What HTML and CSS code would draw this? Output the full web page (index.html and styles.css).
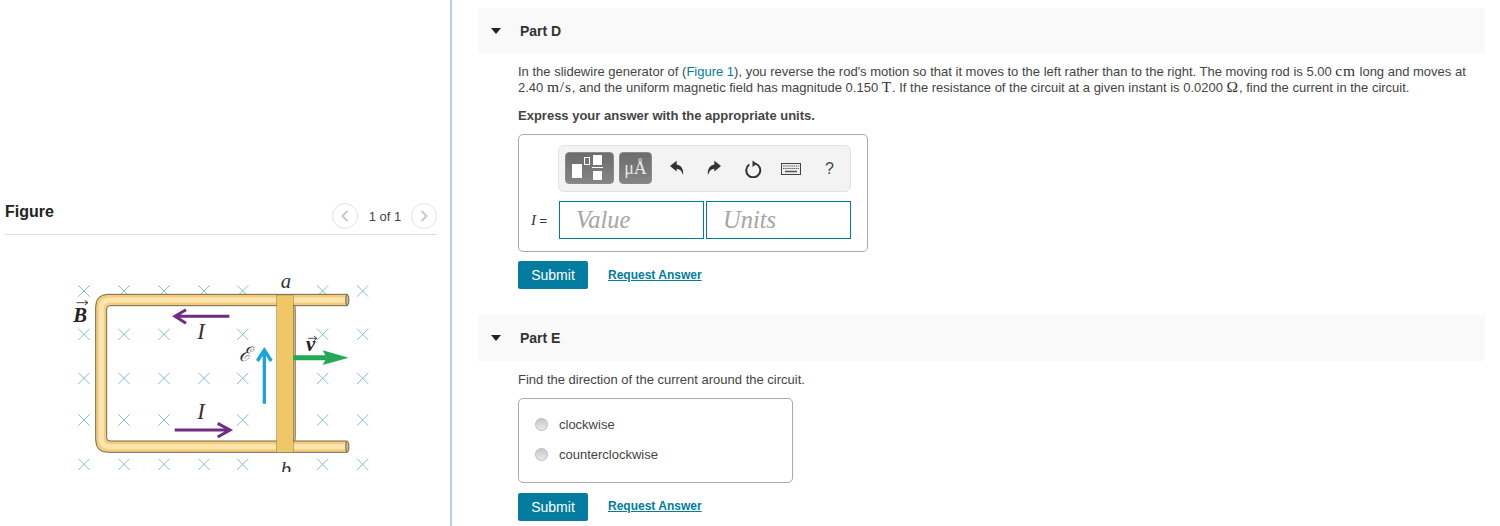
FILE: index.html
```html
<!DOCTYPE html>
<html lang="en">
<head>
<meta charset="utf-8">
<title>Part D and Part E</title>
<link rel="stylesheet" href="styles.css">
</head>
<body>
<div class="page">
  <aside class="figure-pane">
    <div class="figure-head">
      <h2 class="figure-title">Figure</h2>
      <div class="pager">
        <span class="pager-btn"><svg width="10" height="14" viewBox="0 0 10 14"><path d="M7.5 2 2.5 7l5 5" class="chev"/></svg></span>
        <span class="pager-text">1 of 1</span>
        <span class="pager-btn"><svg width="10" height="14" viewBox="0 0 10 14"><path d="M2.5 2l5 5-5 5" class="chev"/></svg></span>
      </div>
    </div>
    <svg class="diagram" width="320" height="207" viewBox="0 0 960 621">
      <defs>
        <path id="x" d="M-17-17 17 17M17-17-17 17" class="cross"/>
      </defs>
      <g id="crosses">
        <use href="#x" x="72" y="78"/><use href="#x" x="192" y="78"/><use href="#x" x="312" y="78"/><use href="#x" x="432" y="78"/><use href="#x" x="548" y="78"/><use href="#x" x="788" y="78"/><use href="#x" x="908" y="78"/>
        <use href="#x" x="72" y="208"/><use href="#x" x="192" y="208"/><use href="#x" x="312" y="208"/><use href="#x" x="548" y="208"/><use href="#x" x="788" y="208"/><use href="#x" x="908" y="208"/>
        <use href="#x" x="72" y="340"/><use href="#x" x="192" y="340"/><use href="#x" x="312" y="340"/><use href="#x" x="432" y="340"/><use href="#x" x="548" y="340"/><use href="#x" x="788" y="340"/><use href="#x" x="908" y="340"/>
        <use href="#x" x="72" y="465"/><use href="#x" x="192" y="465"/><use href="#x" x="312" y="465"/><use href="#x" x="548" y="465"/><use href="#x" x="788" y="465"/><use href="#x" x="908" y="465"/>
        <use href="#x" x="72" y="598"/><use href="#x" x="192" y="598"/><use href="#x" x="312" y="598"/><use href="#x" x="432" y="598"/><use href="#x" x="548" y="598"/><use href="#x" x="788" y="598"/><use href="#x" x="908" y="598"/>
      </g>
      <path d="M862 88H145Q107 88 107 126V524Q107 562 145 562H862V528H150Q140 528 140 518V132Q140 122 150 122H862Z" class="wire"/>
      <path d="M858 105H150Q124 105 124 131V519Q124 545 150 545H858" class="wire-glow"/>
      <ellipse cx="862" cy="105" rx="5" ry="16" class="wire-end"/>
      <ellipse cx="862" cy="545" rx="5" ry="16" class="wire-end"/>
      <path d="M700 120Q706 122 706 130V520Q706 528 700 530Z" class="rod-shadow"/>
      <rect x="650" y="90" width="50" height="472" class="rod"/>
      <path d="M508 154H345M378 134 345 154 378 175" class="arrow-purple"/>
      <path d="M344 495H510M473 475 510 495 473 516" class="arrow-purple"/>
      <path d="M613 416V255M592 288 613 255 634 288" class="arrow-blue"/>
      <path d="M700 278H800" class="arrow-green"/>
      <path d="M788 256 866 278 788 300 800 278Z" class="fill-green"/>
      <text x="662" y="70" class="dg-label">a</text>
      <text x="662" y="632" class="dg-label">b</text>
      <text x="412" y="222" class="dg-label dg-big">I</text>
      <text x="412" y="463" class="dg-label dg-big">I</text>
      <text x="536" y="287" class="dg-label dg-script">ℰ</text>
      <text x="40" y="172" class="dg-bold">B</text>
      <path d="M50 113H82M74 106 84 113 74 120" class="vec"/>
      <text x="738" y="257" class="dg-bold">v</text>
      <path d="M745 220H768M762 213 771 220 762 227" class="vec"/>
    </svg>
  </aside>

  <main class="parts">
    <section class="part">
      <header class="part-bar"><span class="caret"></span><h3 class="part-title">Part D</h3></header>
      <div class="part-body">
        <p class="prompt">In the slidewire generator of (<a class="link" href="#">Figure 1</a>), you reverse the rod's motion so that it moves to the left rather than to the right. The moving rod is 5.00 <span class="math">cm</span> long and moves at 2.40 <span class="math">m/s</span>, and the uniform magnetic field has magnitude 0.150 <span class="math">T</span>. If the resistance of the circuit at a given instant is 0.0200 <span class="math">Ω</span>, find the current in the circuit.</p>
        <p class="instruction">Express your answer with the appropriate units.</p>
        <div class="answer-box">
          <div class="toolbar">
            <span class="tool tool-wide">
              <svg width="49" height="32" viewBox="0 0 49 32"><rect x="7" y="12" width="10" height="14" fill="#fff"/><rect x="19.500" y="5.500" width="5" height="7" fill="none" stroke="#fff"/><rect x="28" y="3" width="9" height="10" fill="#fff"/><rect x="27" y="15" width="11" height="1" fill="#fff"/><rect x="28" y="19" width="9" height="9" fill="#fff"/></svg>
            </span>
            <span class="tool tool-unit">μÅ</span>
            <span class="tool-icon"><svg width="18" height="18" viewBox="0 0 18 18"><path d="M9.700.7 3 6l6.700 5.500V8.700c3 0 5 2 6.300 6.300 1-5-1.500-10-6.300-10.300z" fill="#333"/></svg></span>
            <span class="tool-icon"><svg width="18" height="18" viewBox="0 0 18 18"><path d="M9.300.7 16 6l-6.700 5.500V8.700c-3 0-5 2-6.300 6.300-1-5 1.500-10 6.300-10.300z" fill="#333"/></svg></span>
            <span class="tool-icon"><svg width="18" height="18" viewBox="0 0 18 18"><path d="M5.300 4.500a7 7 0 1 0 6-.9" fill="none" stroke="#333" stroke-width="2"/><path d="M8.500.5v6.500l4.500-3.200z" fill="#333"/></svg></span>
            <span class="tool-icon"><svg width="20" height="12" viewBox="0 0 20 12"><rect x=".5" y=".5" width="19" height="11" fill="#eee" stroke="#444"/><path d="M2 3h16M2 5.500h16" stroke="#666" stroke-width="1.200" stroke-dasharray="1.500 .6"/><path d="M4 8.500h12" stroke="#555" stroke-width="1.500"/></svg></span>
            <span class="tool-icon tool-help">?</span>
          </div>
          <div class="answer-row">
            <span class="answer-label"><i class="var">I</i> =</span>
            <input class="field" type="text" placeholder="Value">
            <input class="field" type="text" placeholder="Units">
          </div>
        </div>
        <div class="actions"><button class="submit" type="button">Submit</button><a class="request" href="#">Request Answer</a></div>
      </div>
    </section>

    <section class="part part-e">
      <header class="part-bar"><span class="caret"></span><h3 class="part-title">Part E</h3></header>
      <div class="part-body">
        <p class="prompt prompt-e">Find the direction of the current around the circuit.</p>
        <div class="choice-box">
          <label class="choice"><span class="radio"></span>clockwise</label>
          <label class="choice"><span class="radio"></span>counterclockwise</label>
        </div>
        <div class="actions actions-e"><button class="submit" type="button">Submit</button><a class="request" href="#">Request Answer</a></div>
      </div>
    </section>
  </main>
</div>
</body>
</html>
```
FILE: styles.css
```css
* { box-sizing: border-box; }
html, body { margin: 0; height: 526px; overflow: hidden; background: #fff; }
body { font-family: "Liberation Sans", Arial, sans-serif; color: #333; font-size: 12px; }
p, h2, h3 { margin: 0; }

.page { display: flex; height: 526px; }

.figure-pane { width: 452px; flex: none; border-right: 2px solid #bccfe2; padding: 202px 0 0 5px; }
.figure-head { width: 432px; height: 33px; display: flex; justify-content: space-between; border-bottom: 1px solid #dde1e4; }
.figure-title { font-size: 16px; line-height: 20px; font-weight: bold; color: #222; }
.pager { display: flex; align-items: center; height: 27px; width: 105px; justify-content: space-between; }
.pager-btn { width: 26px; height: 26px; border: 1px solid #e3e3e3; border-radius: 50%; display: flex; align-items: center; justify-content: center; }
.chev { fill: none; stroke: #c8c8c8; stroke-width: 2; }
.pager-text { font-size: 13px; color: #444; padding: 2px 0 0 1px; }

.diagram { display: block; margin: 30px 0 0 55px; }
.cross { stroke: #5ba5c6; stroke-width: 2.200; fill: none; }
.wire { fill: #f6cd7c; stroke: #3e3a2c; stroke-width: 2.200; }
.wire-glow { fill: none; stroke: #fce5ae; stroke-width: 15; }
.wire-end { fill: #c9b98a; stroke: #3e3a2c; stroke-width: 2; }
.rod { fill: #f0c766; stroke: #8e7a45; stroke-width: 1.500; }
.rod-shadow { fill: #d8c48c; stroke: #776b4b; stroke-width: 2.500; }
.arrow-purple { fill: none; stroke: #6f2e83; stroke-width: 9; }
.arrow-blue { fill: none; stroke: #1ba3da; stroke-width: 10; }
.arrow-green { fill: none; stroke: #23a956; stroke-width: 15; }
.fill-green { fill: #23a956; }
.vec { fill: none; stroke: #222; stroke-width: 2.500; }
.dg-label { font-family: "Liberation Serif", serif; font-style: italic; font-size: 62px; fill: #333; }
.dg-big { font-size: 68px; }
.dg-script { font-size: 60px; }
.dg-bold { font-family: "Liberation Serif", serif; font-style: italic; font-weight: bold; font-size: 62px; fill: #222; }

.parts { flex: 1; padding: 8px 15px 0 26px; min-width: 0; }
.part-bar { height: 46px; background: #f9f9f9; display: flex; align-items: center; padding-left: 13px; }
.caret { width: 0; height: 0; border-left: 5.500px solid transparent; border-right: 5.500px solid transparent; border-top: 6px solid #222; margin-right: 19px; }
.part-title { font-size: 14px; font-weight: bold; color: #333; }
.part-body { padding: 10px 0 0 40px; }
.prompt { font-size: 13px; line-height: 16px; width: 955px; color: #444; }
.prompt-e { width: auto; }
.math { font-family: "Liberation Serif", serif; font-size: 15.500px; line-height: 0; letter-spacing: .8px; color: #333; }
.link { color: #007c9e; text-decoration: none; }
.instruction { font-size: 13px; font-weight: bold; line-height: 16px; margin-top: 12px; color: #444; }

.answer-box { width: 350px; height: 118px; margin-top: 10px; border: 1px solid #aaa; border-radius: 5px; padding: 10px 16px 0 39px; }
.toolbar { height: 47px; background: #f3f3f3; border: 1px solid #e2e2e2; border-radius: 6px; display: flex; padding: 6px 0 0 6px; }
.tool { height: 32px; border-radius: 4px; background: linear-gradient(#6c6c6c, #858585); border: 1px solid #8a8a8a; display: flex; align-items: center; justify-content: center; }
.tool-wide { width: 49px; margin-right: 5px; }
.tool-wide svg { margin: -1px; flex: none; }
.tool-unit { width: 33px; color: #e8e8e8; font-family: "Liberation Serif", serif; font-size: 18px; margin-right: 5px; }
.tool-icon { width: 38.300px; height: 33px; display: flex; align-items: center; justify-content: center; }
.tool-help { font-size: 16px; color: #444; }
.answer-row { display: flex; align-items: center; margin: 9px 0 0 -27px; }
.answer-label { width: 28px; flex: none; font-size: 13px; white-space: nowrap; }
.var { font-family: "Liberation Serif", serif; font-size: 15px; }
.field { width: 145px; flex: none; height: 38px; border: 1px solid #007c9e; padding: 0 0 0 16px; margin: 0 2px 0 0; font-family: "Liberation Serif", serif; font-style: italic; font-size: 24.500px; background: #fff; outline: none; border-radius: 0; }
.field::placeholder { color: #a5a5a5; opacity: 1; }

.actions { display: flex; align-items: center; margin-top: 9px; }
.actions-e { margin-top: 10px; }
.actions-e .request { margin-bottom: 2px; }
.submit { width: 70px; height: 28px; background: #037c9f; color: #fff; border: 0; border-radius: 2px; font-family: "Liberation Sans", Arial, sans-serif; font-size: 14px; padding: 0; }
.request { margin-left: 20px; color: #007c9e; font-size: 12px; font-weight: bold; text-decoration: underline; }

.part-e { margin-top: 26px; }
.part-e .part-body { padding-top: 11px; }
.choice-box { width: 275px; height: 85px; margin-top: 10px; border: 1px solid #aaa; border-radius: 5px; padding: 10px 0 0 16px; }
.choice { display: flex; align-items: center; height: 30px; font-size: 13px; color: #444; }
.radio { width: 13px; height: 13px; border-radius: 50%; background: linear-gradient(#c8c8c8, #e8e8e8); border: 1px solid #bbb; margin-right: 11px; }
```
